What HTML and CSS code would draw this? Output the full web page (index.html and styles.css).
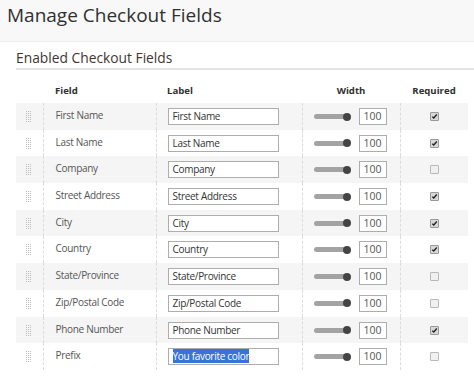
FILE: index.html
```html
<!DOCTYPE html>
<html>
<head>
<meta charset="utf-8">
<link rel="stylesheet" href="styles.css">
</head>
<body>
<svg class="defs" width="0" height="0" aria-hidden="true"><defs><pattern id="dots" width="2" height="2" patternUnits="userSpaceOnUse"><rect x="0" y="0" width="1" height="1" fill="#bdbdbd"/></pattern></defs></svg>
<header class="page-head"><h1 class="page-title">Manage Checkout Fields</h1></header>
<section class="section">
  <h2 class="section-title">Enabled Checkout Fields</h2>
  <table class="fields">
    <thead>
      <tr>
        <th class="c-handle"></th>
        <th class="c-field">Field</th>
        <th class="c-label">Label</th>
        <th class="c-width">Width</th>
        <th class="c-req">Required</th>
      </tr>
    </thead>
    <tbody>
      <tr class="odd"><td class="c-handle"><svg class="handle" viewBox="0 0 5 11"><rect width="5" height="11" fill="url(#dots)"/></svg></td><td class="c-field">First Name</td><td class="c-label"><span class="text-input">First Name</span></td><td class="c-width"><div class="wbox"><span class="slider"><span class="knob"></span></span><span class="num">100</span></div></td><td class="c-req"><span class="cb on"><svg viewBox="0 0 8 8"><path d="M1.5 4.2 L3.2 5.8 L6.6 1.8" fill="none" stroke="#222" stroke-width="1.6"/></svg></span></td></tr>
      <tr><td class="c-handle"><svg class="handle" viewBox="0 0 5 11"><rect width="5" height="11" fill="url(#dots)"/></svg></td><td class="c-field">Last Name</td><td class="c-label"><span class="text-input">Last Name</span></td><td class="c-width"><div class="wbox"><span class="slider"><span class="knob"></span></span><span class="num">100</span></div></td><td class="c-req"><span class="cb on"><svg viewBox="0 0 8 8"><path d="M1.5 4.2 L3.2 5.8 L6.6 1.8" fill="none" stroke="#222" stroke-width="1.6"/></svg></span></td></tr>
      <tr class="odd"><td class="c-handle"><svg class="handle" viewBox="0 0 5 11"><rect width="5" height="11" fill="url(#dots)"/></svg></td><td class="c-field">Company</td><td class="c-label"><span class="text-input">Company</span></td><td class="c-width"><div class="wbox"><span class="slider"><span class="knob"></span></span><span class="num">100</span></div></td><td class="c-req"><span class="cb"></span></td></tr>
      <tr><td class="c-handle"><svg class="handle" viewBox="0 0 5 11"><rect width="5" height="11" fill="url(#dots)"/></svg></td><td class="c-field">Street Address</td><td class="c-label"><span class="text-input">Street Address</span></td><td class="c-width"><div class="wbox"><span class="slider"><span class="knob"></span></span><span class="num">100</span></div></td><td class="c-req"><span class="cb on"><svg viewBox="0 0 8 8"><path d="M1.5 4.2 L3.2 5.8 L6.6 1.8" fill="none" stroke="#222" stroke-width="1.6"/></svg></span></td></tr>
      <tr class="odd"><td class="c-handle"><svg class="handle" viewBox="0 0 5 11"><rect width="5" height="11" fill="url(#dots)"/></svg></td><td class="c-field">City</td><td class="c-label"><span class="text-input">City</span></td><td class="c-width"><div class="wbox"><span class="slider"><span class="knob"></span></span><span class="num">100</span></div></td><td class="c-req"><span class="cb on"><svg viewBox="0 0 8 8"><path d="M1.5 4.2 L3.2 5.8 L6.6 1.8" fill="none" stroke="#222" stroke-width="1.6"/></svg></span></td></tr>
      <tr><td class="c-handle"><svg class="handle" viewBox="0 0 5 11"><rect width="5" height="11" fill="url(#dots)"/></svg></td><td class="c-field">Country</td><td class="c-label"><span class="text-input">Country</span></td><td class="c-width"><div class="wbox"><span class="slider"><span class="knob"></span></span><span class="num">100</span></div></td><td class="c-req"><span class="cb on"><svg viewBox="0 0 8 8"><path d="M1.5 4.2 L3.2 5.8 L6.6 1.8" fill="none" stroke="#222" stroke-width="1.6"/></svg></span></td></tr>
      <tr class="odd"><td class="c-handle"><svg class="handle" viewBox="0 0 5 11"><rect width="5" height="11" fill="url(#dots)"/></svg></td><td class="c-field">State/Province</td><td class="c-label"><span class="text-input">State/Province</span></td><td class="c-width"><div class="wbox"><span class="slider"><span class="knob"></span></span><span class="num">100</span></div></td><td class="c-req"><span class="cb"></span></td></tr>
      <tr><td class="c-handle"><svg class="handle" viewBox="0 0 5 11"><rect width="5" height="11" fill="url(#dots)"/></svg></td><td class="c-field">Zip/Postal Code</td><td class="c-label"><span class="text-input">Zip/Postal Code</span></td><td class="c-width"><div class="wbox"><span class="slider"><span class="knob"></span></span><span class="num">100</span></div></td><td class="c-req"><span class="cb"></span></td></tr>
      <tr class="odd"><td class="c-handle"><svg class="handle" viewBox="0 0 5 11"><rect width="5" height="11" fill="url(#dots)"/></svg></td><td class="c-field">Phone Number</td><td class="c-label"><span class="text-input">Phone Number</span></td><td class="c-width"><div class="wbox"><span class="slider"><span class="knob"></span></span><span class="num">100</span></div></td><td class="c-req"><span class="cb on"><svg viewBox="0 0 8 8"><path d="M1.5 4.2 L3.2 5.8 L6.6 1.8" fill="none" stroke="#222" stroke-width="1.6"/></svg></span></td></tr>
      <tr><td class="c-handle"><svg class="handle" viewBox="0 0 5 11"><rect width="5" height="11" fill="url(#dots)"/></svg></td><td class="c-field">Prefix</td><td class="c-label"><span class="text-input"><span class="sel">You favorite color</span></span></td><td class="c-width"><div class="wbox"><span class="slider"><span class="knob"></span></span><span class="num">100</span></div></td><td class="c-req"><span class="cb"></span></td></tr>
    </tbody>
  </table>
</section>
</body>
</html>
```
FILE: styles.css
```css
* { box-sizing: border-box; }
html, body { margin: 0; padding: 0; background: #fff; }
body {
  font-family: "Open Sans", "DejaVu Sans", sans-serif;
  color: #333;
  width: 474px;
  height: 377px;
  overflow: hidden;
}
.defs { position: absolute; width: 0; height: 0; }
.page-head {
  background: #f8f8f8;
  height: 42px;
  padding: 0 0 0 7px;
  border-bottom: 1px solid #eee;
}
.page-title {
  margin: 0;
  font-size: 19px;
  font-weight: 400;
  line-height: 31px;
  color: #303030;
}
.section { padding: 0 0 0 16px; }
.section-title {
  margin: 0;
  padding-top: 6px;
  font-size: 13.8px;
  font-weight: 400;
  line-height: 20px;
  height: 28px;
  color: #41362f;
  border-bottom: 2px solid #e3e3e3;
}
.fields {
  border-collapse: collapse;
  table-layout: fixed;
  width: 452px;
  font-size: 10px;
}
.fields th {
  font-weight: 700;
  font-size: 9.6px;
  line-height: 14px;
  color: #303030;
  height: 33px;
  padding: 14px 0 0 0;
  vertical-align: top;
  text-align: left;
}
.fields th.c-field { padding-left: 12px; }
.fields th.c-label { padding-left: 11px; }
.fields th.c-width, .fields th.c-req { text-align: center; }
.c-handle { width: 27px; }
.c-field { width: 113px; }
.c-label { width: 146px; }
.c-width { width: 98px; }
.c-req { width: 68px; }
.fields td {
  height: 26.7px;
  padding: 0;
  vertical-align: top;
  border-left: 1px dashed #dcdcdc;
}
.fields td.c-handle { border-left: 0; }
.fields tr.odd td { background: #f5f5f5; }
.fields td.c-field {
  padding: 5px 0 0 12px;
  color: #555;
  line-height: 14px;
  letter-spacing: -0.3px;
}
.handle {
  display: block;
  width: 5px;
  height: 11px;
  margin: 8px 0 0 10px;
}
.fields td.c-label { padding: 5px 0 0 11px; }
.text-input {
  display: block;
  width: 111px;
  height: 17px;
  border: 1px solid #adadad;
  background: #fff;
  padding: 0 4px;
  line-height: 15px;
  font-size: 10px;
  letter-spacing: -0.3px;
  color: #333;
  white-space: nowrap;
  overflow: hidden;
}
.sel { background: #3874d8; color: #fff; }
.fields td.c-width { padding: 5px 0 0 11px; }
.wbox { display: flex; align-items: center; gap: 9px; height: 17px; }
.slider {
  position: relative;
  display: block;
  width: 36px;
  height: 5px;
  border-radius: 3px;
  background: #a3a3a3;
}
.knob {
  position: absolute;
  right: -1px;
  top: -1.5px;
  width: 8px;
  height: 8px;
  border-radius: 50%;
  background: #444;
}
.num {
  display: block;
  width: 28px;
  height: 17px;
  border: 1px solid #adadad;
  background: #fff;
  font-size: 10.5px;
  line-height: 15px;
  padding-left: 4px;
  color: #555;
}
.fields td.c-req { text-align: center; }
.cb {
  display: inline-block;
  width: 9px;
  height: 9px;
  margin-top: 9px;
  border: 1px solid #b9b9b9;
  border-radius: 1px;
  background: #f0f0f0;
}
.cb.on { background: #d8d8d8; border-color: #999; }
.cb svg { display: block; width: 7px; height: 7px; }
```
